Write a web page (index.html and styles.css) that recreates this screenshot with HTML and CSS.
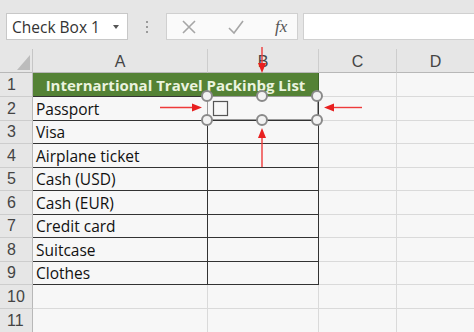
FILE: index.html
```html
<!DOCTYPE html>
<html>
<head>
<meta charset="utf-8">
<link rel="stylesheet" href="styles.css">
</head>
<body>
<div class="app">
  <div class="toolbar">
    <div class="namebox">
      <span class="name">Check Box 1</span>
      <span class="caret"></span>
    </div>
    <div class="dots"><i></i><i></i><i></i></div>
    <div class="fxbox">
      <svg class="ico" width="16" height="16" viewBox="0 0 16 16"><path d="M2 2 L14 14 M14 2 L2 14" stroke="#a6a6a6" stroke-width="1.6" fill="none"/></svg>
      <svg class="ico" width="18" height="16" viewBox="0 0 18 16"><path d="M2 9 L7 14 L16 2" stroke="#a6a6a6" stroke-width="1.6" fill="none"/></svg>
      <span class="fx">fx</span>
    </div>
    <div class="formula"></div>
  </div>
  <div class="sheet">
    <div class="corner"><span class="tri"></span></div>
    <div class="colh">A</div>
    <div class="colh">B</div>
    <div class="colh">C</div>
    <div class="colh last">D</div>

    <div class="rowh">1</div>
    <div class="title">Internartional Travel Packinbg List</div>
    <div class="cell"></div>
    <div class="cell last"></div>

    <div class="rowh">2</div>
    <div class="cell ta">Passport</div>
    <div class="cell tb"></div>
    <div class="cell"></div>
    <div class="cell last"></div>

    <div class="rowh">3</div>
    <div class="cell ta">Visa</div>
    <div class="cell tb"></div>
    <div class="cell"></div>
    <div class="cell last"></div>

    <div class="rowh">4</div>
    <div class="cell ta">Airplane ticket</div>
    <div class="cell tb"></div>
    <div class="cell"></div>
    <div class="cell last"></div>

    <div class="rowh">5</div>
    <div class="cell ta">Cash (USD)</div>
    <div class="cell tb"></div>
    <div class="cell"></div>
    <div class="cell last"></div>

    <div class="rowh">6</div>
    <div class="cell ta">Cash (EUR)</div>
    <div class="cell tb"></div>
    <div class="cell"></div>
    <div class="cell last"></div>

    <div class="rowh">7</div>
    <div class="cell ta">Credit card</div>
    <div class="cell tb"></div>
    <div class="cell"></div>
    <div class="cell last"></div>

    <div class="rowh">8</div>
    <div class="cell ta">Suitcase</div>
    <div class="cell tb"></div>
    <div class="cell"></div>
    <div class="cell last"></div>

    <div class="rowh">9</div>
    <div class="cell ta">Clothes</div>
    <div class="cell tb"></div>
    <div class="cell"></div>
    <div class="cell last"></div>

    <div class="rowh">10</div>
    <div class="cell"></div>
    <div class="cell"></div>
    <div class="cell"></div>
    <div class="cell last"></div>

    <div class="rowh">11</div>
    <div class="cell"></div>
    <div class="cell"></div>
    <div class="cell"></div>
    <div class="cell last"></div>
  </div>
  <svg class="overlay" width="474" height="332" viewBox="0 0 474 332">
    <rect x="213.5" y="101.5" width="14" height="14" fill="#f7f7f7" stroke="#555" stroke-width="1.2"/>
    <rect x="207.5" y="96.5" width="110" height="23" fill="none" stroke="#9a9a9a" stroke-width="1"/>
    <g fill="#f2f2f2" stroke="#8a8a8a" stroke-width="2">
      <circle cx="207" cy="96" r="5"/>
      <circle cx="262" cy="96" r="5"/>
      <circle cx="317" cy="96" r="5"/>
      <circle cx="207" cy="120" r="5"/>
      <circle cx="262" cy="120" r="5"/>
      <circle cx="317" cy="120" r="5"/>
    </g>
    <g stroke="#ee3a3a" stroke-width="1.4" fill="none">
      <line x1="262" y1="47" x2="262" y2="65"/>
      <line x1="262" y1="136" x2="262" y2="167"/>
      <line x1="160" y1="107.5" x2="194" y2="107.5"/>
      <line x1="332" y1="107.5" x2="362" y2="107.5"/>
    </g>
    <g fill="#e82020">
      <polygon points="258,63 266,63 262,73"/>
      <polygon points="258,138 266,138 262,128"/>
      <polygon points="192,103.5 192,111.5 202,107.5"/>
      <polygon points="334,103.5 334,111.5 324,107.5"/>
    </g>
  </svg>
</div>
</body>
</html>
```

FILE: styles.css
```css
* { box-sizing: border-box; }
html, body { margin: 0; padding: 0; }
body {
  width: 474px;
  height: 332px;
  overflow: hidden;
  background: #e6e6e6;
  font-family: "Open Sans", "Liberation Sans", sans-serif;
}
.app { position: relative; width: 474px; height: 332px; overflow: hidden; }
.toolbar {
  height: 49px;
  display: flex;
  align-items: flex-start;
  padding-top: 13px;
  padding-left: 6px;
}
.namebox {
  width: 122px;
  height: 27px;
  background: #fff;
  border: 1px solid #c8c8c8;
  display: flex;
  align-items: center;
  padding-left: 5px;
  position: relative;
}
.name { font-size: 15.5px; color: #333; }
.caret {
  position: absolute;
  right: 8px;
  top: 11px;
  width: 0; height: 0;
  border-left: 3px solid transparent;
  border-right: 3px solid transparent;
  border-top: 4px solid #555;
}
.dots {
  width: 38px;
  height: 27px;
  display: flex;
  flex-direction: column;
  align-items: center;
  justify-content: center;
  gap: 3px;
}
.dots i { display: block; width: 2px; height: 2px; background: #9a9a9a; }
.fxbox {
  width: 132px;
  height: 27px;
  background: #fafafa;
  border: 1px solid #d0d0d0;
  display: flex;
  align-items: center;
  padding-left: 14px;
}
.fxbox .ico { flex: none; }
.fxbox .ico + .ico { margin-left: 30px; }
.fx {
  margin-left: 30px;
  font-family: "Liberation Serif", serif;
  font-style: italic;
  font-size: 17px;
  color: #555;
}
.formula {
  margin-left: 5px;
  flex: 1;
  height: 27px;
  background: #fff;
  border: 1px solid #d0d0d0;
  border-right: none;
}
.sheet {
  display: grid;
  grid-template-columns: 33px 175px 111px 78px 1fr;
  grid-template-rows: 24px 24px 24px 23px 24px 23px 24px 23px 24px 23px 24px 24px;
  background: #f7f7f7;
}
.corner, .colh, .rowh {
  background: #e6e6e6;
  color: #444;
}
.corner {
  border-right: 1px solid #c6c6c6;
  border-bottom: 1px solid #b8b8b8;
  position: relative;
}
.tri {
  position: absolute;
  right: 2px;
  bottom: 2px;
  width: 0; height: 0;
  border-left: 13px solid transparent;
  border-bottom: 15px solid #bcbcbc;
}
.colh {
  border-right: 1px solid #cdcdcd;
  border-bottom: 1px solid #b8b8b8;
  display: flex;
  align-items: center;
  justify-content: center;
  font-family: "Liberation Sans", sans-serif;
  font-size: 16px;
  padding-top: 3px;
}
.colh.last { border-right: none; }
.rowh {
  border-right: 1px solid #b8b8b8;
  border-bottom: 1px solid #cdcdcd;
  display: flex;
  align-items: center;
  padding-left: 7px;
  font-family: "Liberation Sans", sans-serif;
  font-size: 16px;
}
.cell {
  border-right: 1px solid #dadada;
  border-bottom: 1px solid #dadada;
  display: flex;
  align-items: center;
  padding-left: 3px;
  font-size: 15.5px;
  color: #111;
  white-space: nowrap;
}
.cell.last { border-right: none; }
.cell.ta, .cell.tb { border-right: 1px solid #333; border-bottom: 1px solid #333; }
.title {
  grid-column: span 2;
  background: #548235;
  color: #eaf3df;
  font-weight: 700;
  font-size: 15px;
  display: flex;
  align-items: center;
  justify-content: center;
  border-right: 1px solid #3f6628;
  border-bottom: 1px solid #333;
  white-space: nowrap;
}
.overlay { position: absolute; left: 0; top: 0; }
```
